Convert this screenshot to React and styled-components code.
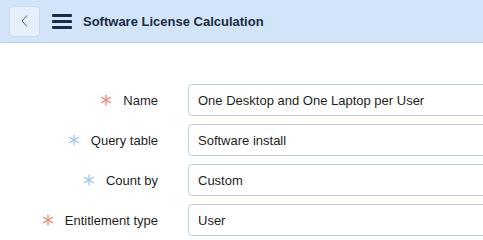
import React from "react";
import styled, { createGlobalStyle } from "styled-components";

const Global = createGlobalStyle`
  html, body { margin: 0; padding: 0; background: #ffffff; }
  body { font-family: "Liberation Sans", Arial, sans-serif; overflow: hidden; }
`;

const Page = styled.div`
  width: 483px;
  height: 240px;
  overflow: hidden;
`;

const Header = styled.header`
  height: 43px;
  box-sizing: border-box;
  background: #d1e4f8;
  border-bottom: 1px solid #b8cde2;
  display: flex;
  align-items: center;
  padding-left: 9px;
`;

const BackButton = styled.button`
  width: 31px;
  height: 31px;
  box-sizing: border-box;
  margin: 0;
  padding: 0;
  border: 1px solid #c6d9ee;
  border-radius: 4px;
  background: #e6f0fb;
  display: flex;
  align-items: center;
  justify-content: center;
  color: #4a5868;
`;

const Burger = styled.span`
  margin-left: 12px;
  width: 20px;
  display: flex;
  flex-direction: column;
  gap: 3px;
  & > i {
    display: block;
    height: 3px;
    border-radius: 1px;
    background: #1b2c40;
  }
`;

const Title = styled.h1`
  margin: 0 0 0 11px;
  font-size: 13px;
  font-weight: 700;
  color: #1b2c40;
`;

const Form = styled.div`
  padding-top: 41px;
  display: flex;
  flex-direction: column;
  gap: 8px;
`;

const Row = styled.div`
  display: grid;
  grid-template-columns: 158px 1fr;
  column-gap: 30px;
  align-items: center;
`;

const Label = styled.label`
  display: flex;
  justify-content: flex-end;
  align-items: center;
  gap: 11px;
  font-size: 13px;
  color: #1e1e1e;
`;

const Star = styled.span`
  height: 14px;
  display: inline-flex;
  align-items: center;
  color: ${(p) => (p.$required ? "#f0907f" : "#a9c9ea")};
`;

const Field = styled.div`
  height: 32px;
  box-sizing: border-box;
  width: 320px;
  border: 1px solid #bcd0e4;
  border-radius: 4px;
  background: #fff;
  display: flex;
  align-items: center;
  padding-left: 9px;
  font-size: 13px;
  color: #1e1e1e;
  white-space: nowrap;
`;

const fields = [
  { label: "Name", value: "One Desktop and One Laptop per User", required: true },
  { label: "Query table", value: "Software install", required: false },
  { label: "Count by", value: "Custom", required: false },
  { label: "Entitlement type", value: "User", required: true },
];

function Asterisk({ required }) {
  return (
    <Star $required={required}>
      <svg width="12" height="12" viewBox="0 0 12 12">
        <g stroke="currentColor" strokeWidth="1.4" strokeLinecap="butt">
          <line x1="6" y1="0.5" x2="6" y2="11.5" />
          <line x1="1.2" y1="3.2" x2="10.8" y2="8.8" />
          <line x1="1.2" y1="8.8" x2="10.8" y2="3.2" />
        </g>
      </svg>
    </Star>
  );
}

export default function App() {
  return (
    <Page>
      <Global />
      <Header>
        <BackButton aria-label="Back">
          <svg width="10" height="14" viewBox="0 0 10 14">
            <path d="M7 1.5 L2 7 L7 12.5" fill="none" stroke="currentColor" strokeWidth="1" />
          </svg>
        </BackButton>
        <Burger>
          <i />
          <i />
          <i />
        </Burger>
        <Title>Software License Calculation</Title>
      </Header>
      <Form>
        {fields.map((f) => (
          <Row key={f.label}>
            <Label>
              <Asterisk required={f.required} />
              {f.label}
            </Label>
            <Field>{f.value}</Field>
          </Row>
        ))}
      </Form>
    </Page>
  );
}
